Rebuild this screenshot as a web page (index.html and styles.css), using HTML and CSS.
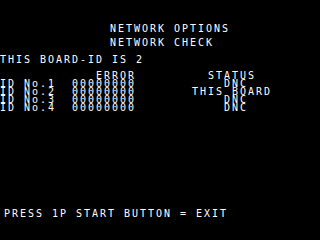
FILE: index.html
```html
<!DOCTYPE html>
<html>
<head>
<meta charset="utf-8">
<link rel="stylesheet" href="styles.css">
</head>
<body>
<main class="screen">
  <div class="title first">NETWORK OPTIONS</div>
  <div class="title second">NETWORK CHECK</div>
  <div class="board">THIS BOARD-ID IS 2</div>
  <div class="table">
    <div class="id"></div><div class="err head">ERROR</div><div class="status s-status">STATUS</div>
    <div class="id">ID No.1</div><div class="err">00000000</div><div class="status s-dnc">DNC</div>
    <div class="id">ID No.2</div><div class="err">00000000</div><div class="status">THIS BOARD</div>
    <div class="id">ID No.3</div><div class="err">00000000</div><div class="status s-dnc">DNC</div>
    <div class="id">ID No.4</div><div class="err">00000000</div><div class="status s-dnc">DNC</div>
  </div>
  <div class="footer">PRESS 1P START BUTTON = EXIT</div>
</main>
</body>
</html>
```
FILE: styles.css
```css
html, body {
  margin: 0;
  padding: 0;
  background: #000;
}
.screen {
  width: 320px;
  height: 240px;
  background: #000;
  color: #fff;
  font-family: "DejaVu Sans Mono", "Liberation Mono", monospace;
  font-size: 10px;
  letter-spacing: 1.98px;
  line-height: 8px;
  white-space: nowrap;
  padding-top: 25px;
  box-sizing: border-box;
  overflow: hidden;
}
.title {
  height: 8px;
  padding-left: 110px;
}
.second {
  margin-top: 6px;
}
.board {
  height: 8px;
  margin-top: 9px;
}
.table {
  margin-top: 8px;
  display: grid;
  grid-template-columns: 72px 120px 80px;
  grid-auto-rows: 8px;
}
.err.head {
  padding-left: 24px;
}
.s-status {
  padding-left: 16px;
}
.s-dnc {
  padding-left: 32px;
}
.footer {
  height: 8px;
  margin-top: 98px;
  padding-left: 4px;
}
```
